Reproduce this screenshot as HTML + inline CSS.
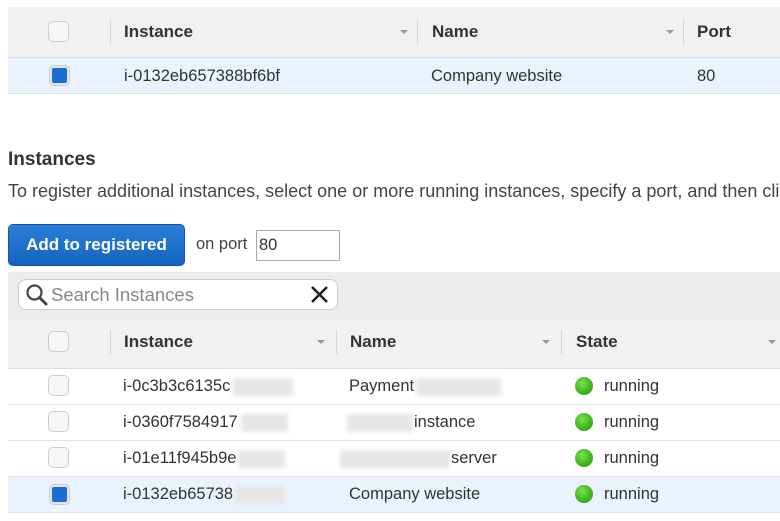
<!DOCTYPE html>
<html><head><meta charset="utf-8"><style>
*{box-sizing:border-box;margin:0;padding:0}
body{width:780px;height:521px;background:#fff;font-family:"Liberation Sans",Arial,sans-serif;color:#333;position:relative;overflow:hidden;font-size:16.5px}
.a{position:absolute}
.hdr{background:#f1f1f1;border-bottom:1px solid #ddd}
.sep{position:absolute;width:1px;background:#d5d5d5;height:24px}
.arr{position:absolute;width:0;height:0;border-left:4px solid transparent;border-right:4px solid transparent;border-top:4px solid #999}
.th{position:absolute;font-weight:bold;font-size:17px;color:#333}
.cb{position:absolute;width:21px;height:21px;border:1px solid #ccc;border-radius:5px;background:#f6f6f6}
.cbs{position:absolute;width:19px;height:19px;border-radius:4px;background:#1a6ed1;border:2px solid #e6e6e6;box-shadow:0 0 0 1px #ccc}
.row{position:absolute;left:8px;width:772px;height:36px;border-bottom:1px solid #e3e3e3}
.td{position:absolute;font-size:16.5px;color:#333;white-space:nowrap}
.blur{position:absolute;background:#e6e6e6;filter:blur(2px);height:18px}
.dot{position:absolute;width:18px;height:18px;border-radius:50%;background:radial-gradient(circle at 40% 35%,#7be050,#3cb319 60%,#2a9a10)}
</style></head><body>
<div class="a hdr" style="left:8px;top:7px;width:772px;height:51px"></div>
<div class="cb" style="left:48px;top:21px"></div>
<div class="sep" style="left:110px;top:20px"></div>
<div class="th" style="left:124px;top:22px">Instance</div>
<div class="arr" style="left:400px;top:30px"></div>
<div class="sep" style="left:417px;top:20px"></div>
<div class="th" style="left:432px;top:22px">Name</div>
<div class="arr" style="left:666px;top:30px"></div>
<div class="sep" style="left:683px;top:20px"></div>
<div class="th" style="left:697px;top:22px">Port</div>
<div class="row" style="top:58px;background:#eaf3fd"></div>
<div class="cbs" style="left:50px;top:66px"></div>
<div class="td" style="left:124px;top:67px">i-0132eb657388bf6bf</div>
<div class="td" style="left:431px;top:67px">Company website</div>
<div class="td" style="left:697px;top:67px">80</div>

<div class="a" style="left:8px;top:149px;font-size:19px;font-weight:bold;color:#333">Instances</div>
<div class="a" style="left:8px;top:181px;font-size:18px;color:#444;white-space:nowrap">To register additional instances, select one or more running instances, specify a port, and then click</div>
<div class="a" style="left:8px;top:224px;width:177px;height:42px;border-radius:5px;background:linear-gradient(#2b7fd8,#1464c0);color:#fff;font-weight:bold;font-size:17px;line-height:40px;text-align:center;border:1px solid #1258aa">Add to registered</div>
<div class="a" style="left:196px;top:235px;font-size:16.5px;color:#444">on port</div>
<div class="a" style="left:256px;top:230px;width:84px;height:31px;border:1px solid #aaa;font-size:16.5px;padding:5px 2px">80</div>

<div class="a" style="left:8px;top:272px;width:772px;height:47px;background:#ececec"></div>
<div class="a" style="left:18px;top:279px;width:320px;height:31px;background:#fff;border:1px solid #ccc;border-radius:8px"></div>
<svg class="a" style="left:25px;top:283px" width="24" height="24" viewBox="0 0 24 24"><circle cx="9.5" cy="9.5" r="7" fill="none" stroke="#444" stroke-width="2.2"/><line x1="14.5" y1="14.5" x2="21" y2="21" stroke="#444" stroke-width="3" stroke-linecap="round"/></svg>
<div class="a" style="left:51px;top:284px;font-size:18.5px;color:#888">Search Instances</div>
<svg class="a" style="left:310px;top:285px" width="19" height="19" viewBox="0 0 19 19"><path d="M2 2L17 17M17 2L2 17" stroke="#222" stroke-width="2.6"/></svg>

<div class="a hdr" style="left:8px;top:319px;width:772px;height:50px"></div>
<div class="cb" style="left:48px;top:331px"></div>
<div class="sep" style="left:110px;top:330px"></div>
<div class="th" style="left:124px;top:332px">Instance</div>
<div class="arr" style="left:317px;top:340px"></div>
<div class="sep" style="left:336px;top:330px"></div>
<div class="th" style="left:350px;top:332px">Name</div>
<div class="arr" style="left:542px;top:340px"></div>
<div class="sep" style="left:561px;top:330px"></div>
<div class="th" style="left:576px;top:332px">State</div>
<div class="arr" style="left:768px;top:340px"></div>

<div class="row" style="top:369px"></div>
<div class="cb" style="left:48px;top:375px"></div>
<div class="td" style="left:123px;top:377px">i-0c3b3c6135c</div>
<div class="blur" style="left:233px;top:378px;width:60px"></div>
<div class="td" style="left:349px;top:377px">Payment</div>
<div class="blur" style="left:416px;top:378px;width:85px"></div>
<div class="dot" style="left:575px;top:377px"></div>
<div class="td" style="left:604px;top:377px">running</div>

<div class="row" style="top:405px"></div>
<div class="cb" style="left:48px;top:411px"></div>
<div class="td" style="left:123px;top:413px">i-0360f7584917</div>
<div class="blur" style="left:241px;top:414px;width:47px"></div>
<div class="blur" style="left:347px;top:414px;width:66px"></div>
<div class="td" style="left:414px;top:413px">instance</div>
<div class="dot" style="left:575px;top:413px"></div>
<div class="td" style="left:604px;top:413px">running</div>

<div class="row" style="top:441px"></div>
<div class="cb" style="left:48px;top:447px"></div>
<div class="td" style="left:123px;top:449px">i-01e11f945b9e</div>
<div class="blur" style="left:238px;top:450px;width:47px"></div>
<div class="blur" style="left:340px;top:450px;width:110px"></div>
<div class="td" style="left:451px;top:449px">server</div>
<div class="dot" style="left:575px;top:449px"></div>
<div class="td" style="left:604px;top:449px">running</div>

<div class="row" style="top:477px;background:#eaf3fd"></div>
<div class="cbs" style="left:50px;top:485px"></div>
<div class="td" style="left:123px;top:485px">i-0132eb65738</div>
<div class="blur" style="left:235px;top:486px;width:50px"></div>
<div class="td" style="left:349px;top:485px">Company website</div>
<div class="dot" style="left:575px;top:485px"></div>
<div class="td" style="left:604px;top:485px">running</div>
</body></html>
